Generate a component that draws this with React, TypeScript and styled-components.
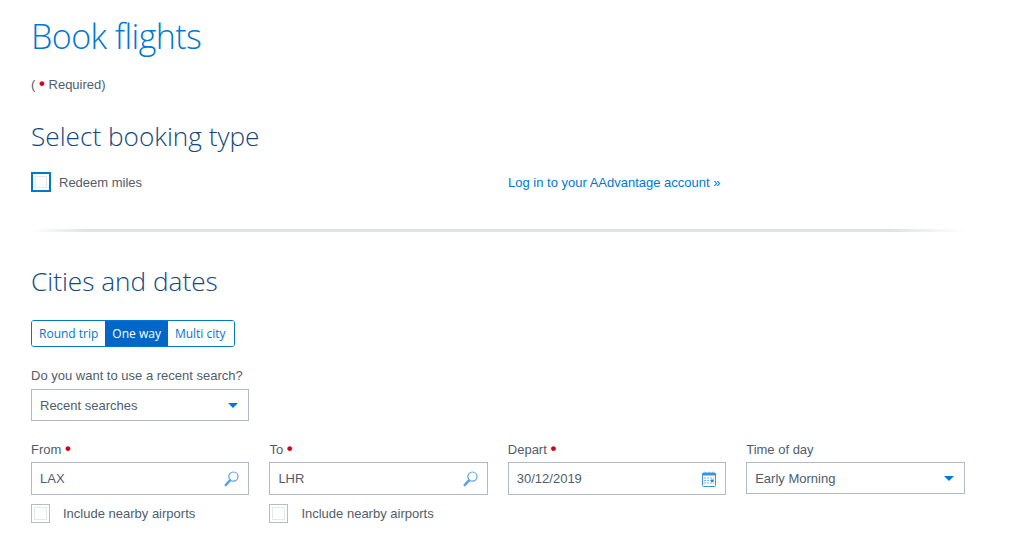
import { createGlobalStyle, styled } from "styled-components";

const GlobalStyle = createGlobalStyle`
  html, body {
    margin: 0;
    background: #fff;
    font-family: "Liberation Sans", Arial, sans-serif;
    color: #4f5d6c;
  }
`;

const Page = styled.main`
  width: 934px;
  height: 555px;
  padding: 0 59px 0 31px;
  overflow: hidden;
`;

const Title = styled.h1`
  margin: 0;
  padding-top: 14px;
  height: 44px;
  font: 300 34px/44px "Open Sans", sans-serif;
  letter-spacing: -0.55px;
  color: #0078d2;
`;

const RequiredNote = styled.p`
  margin: 19px 0 0;
  font-size: 13px;
  line-height: 16px;
`;

const Star = styled.span`
  color: #d6001c;
  font-size: 17px;
  line-height: 0;
  font-weight: 700;
`;

const SectionTitle = styled.h2<{ $top: number }>`
  margin: ${(p) => p.$top}px 0 0;
  font: 300 26.2px/34px "Open Sans", sans-serif;
  color: #14497f;
`;

const BookingRow = styled.div`
  display: grid;
  grid-template-columns: 477px 1fr;
  align-items: center;
  margin-top: 19px;
  height: 20px;
`;

const CheckRow = styled.label<{ $gap: number }>`
  display: flex;
  align-items: center;
  gap: ${(p) => p.$gap}px;
  font-size: 13px;
`;

const Check = styled.span<{ $focus?: boolean }>`
  display: block;
  box-sizing: border-box;
  width: ${(p) => (p.$focus ? 20 : 19)}px;
  height: ${(p) => (p.$focus ? 20 : 19)}px;
  background: #fff;
  border: ${(p) => (p.$focus ? "2px solid #0078d2" : "1px solid #b4bcc6")};
  box-shadow: inset 0 0 0 2px #fff, inset 0 0 0 3px #e3e8ee;
`;

const LoginLink = styled.a`
  font-size: 13px;
  color: #0078d2;
  text-decoration: none;
`;

const Divider = styled.hr`
  margin: 37px 0 0;
  height: 3px;
  border: 0;
  background: linear-gradient(90deg, #fff 0, #dfe2e6 6%, #dfe2e6 92%, #fff 100%);
`;

const TripToggle = styled.div`
  display: inline-flex;
  margin-top: 22px;
  height: 27px;
  box-sizing: border-box;
  border: 1px solid #0078d2;
  border-radius: 3px;
  overflow: hidden;
`;

const TripOption = styled.button<{ $active?: boolean }>`
  border: 0;
  padding: 0 7px;
  font: 400 12px/25px "Open Sans", sans-serif;
  color: ${(p) => (p.$active ? "#fff" : "#0078d2")};
  background: ${(p) => (p.$active ? "#0067c8" : "#fff")};

  &:last-child {
    padding-right: 8px;
  }
`;

const FieldLabel = styled.label`
  display: block;
  font-size: 13px;
  line-height: 14px;
  height: 14px;
`;

const RecentBlock = styled.div`
  width: 218px;
  margin-top: 22px;
`;

const Control = styled.div<{ $height: number; $gap: number }>`
  display: flex;
  align-items: center;
  justify-content: space-between;
  box-sizing: border-box;
  height: ${(p) => p.$height}px;
  margin-top: ${(p) => p.$gap}px;
  padding: 0 9px 0 8px;
  font-size: 13px;
  background: #fff;
  border: 1px solid #b0bac6;
`;

const Caret = styled.span`
  width: 0;
  height: 0;
  margin-right: 1px;
  border-left: 5px solid transparent;
  border-right: 5px solid transparent;
  border-top: 5px solid #0078d2;
`;

const FieldGrid = styled.div`
  display: grid;
  grid-template-columns: repeat(4, 218.4px);
  column-gap: 20px;
  margin-top: 22px;
`;

const NearbyRow = styled(CheckRow)`
  margin-top: 9px;
`;

const SearchIcon = () => (
  <svg width="15" height="16" viewBox="0 0 15 16" fill="none">
    <circle cx="9.4" cy="5.6" r="4.6" stroke="#5ba3e6" strokeWidth="1.2" />
    <path d="M5.8 9.6 L1.8 14" stroke="#5ba3e6" strokeWidth="2.6" strokeLinecap="round" />
  </svg>
);

const CalendarIcon = () => (
  <svg width="14" height="16" viewBox="0 0 14 16" fill="none">
    <path d="M3 0.5v2M7 0.5v2M11 0.5v2" stroke="#9cc8f2" />
    <rect x="0.5" y="2" width="13" height="13.5" rx="1" fill="#fff" stroke="#3d93e3" />
    <rect x="0.5" y="2" width="13" height="2.5" fill="#3d93e3" />
    <path d="M2 7h10M2 9.5h10M2 12h10" stroke="#7db5ec" strokeDasharray="2 1" />
    <rect x="9" y="8.5" width="2.5" height="2.5" fill="#2a7fd6" />
  </svg>
);

const Nearby = () => (
  <NearbyRow $gap={13}>
    <Check />
    Include nearby airports
  </NearbyRow>
);

export default function App() {
  return (
    <Page>
      <GlobalStyle />
      <Title>Book flights</Title>
      <RequiredNote>
        ( <Star>•</Star> Required)
      </RequiredNote>
      <SectionTitle $top={26}>Select booking type</SectionTitle>
      <BookingRow>
        <CheckRow $gap={8}>
          <Check $focus />
          Redeem miles
        </CheckRow>
        <LoginLink href="#">Log in to your AAdvantage account »</LoginLink>
      </BookingRow>
      <Divider />
      <SectionTitle $top={32}>Cities and dates</SectionTitle>
      <TripToggle>
        <TripOption>Round trip</TripOption>
        <TripOption $active>One way</TripOption>
        <TripOption>Multi city</TripOption>
      </TripToggle>
      <RecentBlock>
        <FieldLabel>Do you want to use a recent search?</FieldLabel>
        <Control $height={32} $gap={6}>
          Recent searches
          <Caret />
        </Control>
      </RecentBlock>
      <FieldGrid>
        <div>
          <FieldLabel>
            From <Star>•</Star>
          </FieldLabel>
          <Control $height={33} $gap={5}>
            LAX
            <SearchIcon />
          </Control>
          <Nearby />
        </div>
        <div>
          <FieldLabel>
            To <Star>•</Star>
          </FieldLabel>
          <Control $height={33} $gap={5}>
            LHR
            <SearchIcon />
          </Control>
          <Nearby />
        </div>
        <div>
          <FieldLabel>
            Depart <Star>•</Star>
          </FieldLabel>
          <Control $height={33} $gap={5}>
            30/12/2019
            <CalendarIcon />
          </Control>
        </div>
        <div>
          <FieldLabel>Time of day</FieldLabel>
          <Control $height={32} $gap={5}>
            Early Morning
            <Caret />
          </Control>
        </div>
      </FieldGrid>
    </Page>
  );
}
